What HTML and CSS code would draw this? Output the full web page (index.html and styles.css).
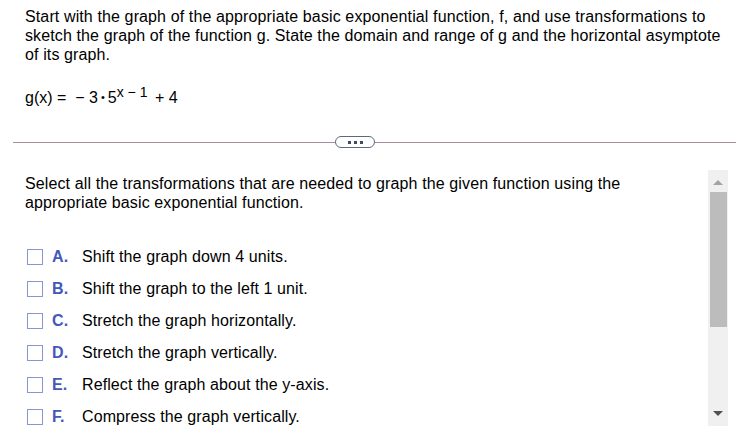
FILE: index.html
```html
<!DOCTYPE html>
<html>
<head>
<meta charset="utf-8">
<link rel="stylesheet" href="styles.css">
</head>
<body>
<div class="prompt">
  <p class="text">Start with the graph of the appropriate basic exponential function, f, and use transformations to sketch the graph of the function g. State the domain and range of g and the horizontal asymptote of its graph.</p>
  <p class="formula">g(x)&nbsp;= &nbsp;− 3<span class="dot">•</span>5<sup>x − 1</sup> + 4</p>
</div>
<div class="divider">
  <div class="line left"></div>
  <div class="pill"><span></span><span></span><span></span></div>
  <div class="line right"></div>
</div>
<div class="panel">
  <div class="content">
    <p class="text">Select all the transformations that are needed to graph the given function using the appropriate basic exponential function.</p>
    <ul class="options">
      <li><span class="box"></span><span class="label">A.</span><span>Shift the graph down 4 units.</span></li>
      <li><span class="box"></span><span class="label">B.</span><span>Shift the graph to the left 1 unit.</span></li>
      <li><span class="box"></span><span class="label">C.</span><span>Stretch the graph horizontally.</span></li>
      <li><span class="box"></span><span class="label">D.</span><span>Stretch the graph vertically.</span></li>
      <li><span class="box"></span><span class="label">E.</span><span>Reflect the graph about the y-axis.</span></li>
      <li><span class="box"></span><span class="label">F.</span><span>Compress the graph vertically.</span></li>
    </ul>
  </div>
  <div class="scrollbar">
    <div class="arrow up"></div>
    <div class="thumb"></div>
    <div class="track"></div>
    <div class="arrow down"></div>
  </div>
</div>
</body>
</html>
```
FILE: styles.css
```css
html, body {
  margin: 0;
  padding: 0;
  background: #fff;
}
body {
  font-family: "Liberation Sans", Arial, sans-serif;
  font-size: 16px;
  color: #000;
  width: 736px;
  height: 432px;
  overflow: hidden;
}
p { margin: 0; }
.prompt {
  padding: 7px 8px 0 25px;
}
.text {
  line-height: 19px;
  letter-spacing: 0.12px;
}
.formula {
  margin-top: 23px;
  font-size: 16px;
  line-height: 20px;
}
.formula .dot {
  font-size: 11px;
  margin: 0 3px;
  vertical-align: 2px;
}
.formula sup {
  font-size: 14px;
  vertical-align: 6px;
  line-height: 0;
  margin-right: 3px;
}
.divider {
  display: flex;
  align-items: center;
  margin-top: 28px;
  margin-left: 13px;
  height: 12px;
}
.line {
  height: 1px;
  background: #a98c9e;
}
.line.left { width: 322px; }
.line.right { flex: 1; }
.pill {
  width: 38px;
  height: 10px;
  border: 1px solid #5b6a80;
  border-radius: 6px;
  display: flex;
  align-items: center;
  justify-content: center;
  gap: 3px;
}
.pill span {
  width: 3px;
  height: 3px;
  background: #3f4d60;
}
.panel {
  display: flex;
  margin-top: 22px;
  height: 256px;
}
.content {
  flex: 1;
  padding: 4px 40px 0 25px;
}
.options {
  list-style: none;
  margin: 29px 0 0 0;
  padding: 0 0 0 2px;
  font-size: 16px;
  letter-spacing: 0.1px;
}
.options li {
  display: flex;
  align-items: center;
  height: 32px;
}
.box {
  width: 14px;
  height: 14px;
  border: 1px solid #8796d0;
  margin-right: 9px;
  flex: none;
}
.label {
  width: 30px;
  font-weight: bold;
  color: #4558b8;
}
.scrollbar {
  width: 20px;
  margin-right: 8px;
  background: #f0f0f0;
  display: flex;
  flex-direction: column;
  align-items: center;
}
.arrow {
  width: 0;
  height: 0;
  border-left: 5px solid transparent;
  border-right: 5px solid transparent;
}
.arrow.up {
  margin-top: 10px;
  margin-bottom: 7px;
  border-bottom: 5px solid #a3a3a3;
}
.arrow.down {
  margin-bottom: 10px;
  border-top: 5px solid #505050;
}
.thumb {
  width: 17px;
  height: 135px;
  background: #bcbcbc;
}
.track { flex: 1; }
```
